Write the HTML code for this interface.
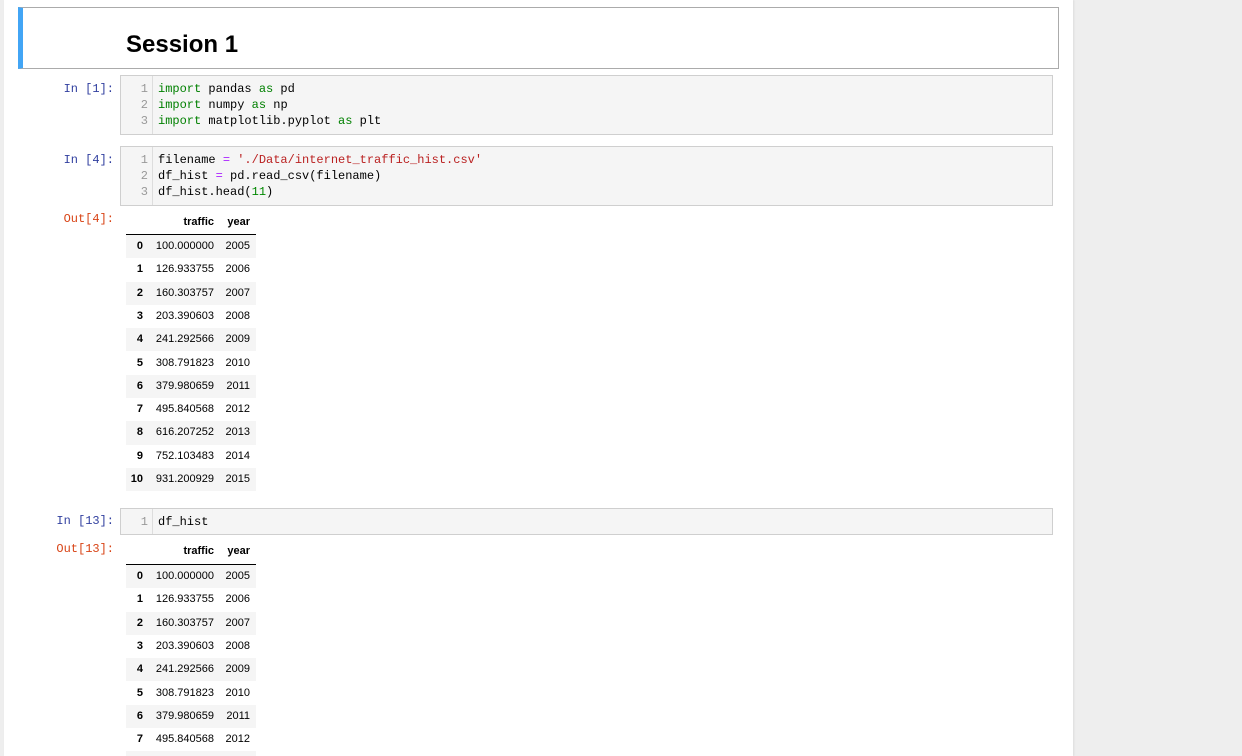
<!DOCTYPE html>
<html style="overflow:hidden;width:1242px;height:756px"><head><meta charset="utf-8"><style>
*{margin:0;padding:0;box-sizing:border-box}
body{width:1242px;height:756px;background:#eeeeee;position:relative;overflow:hidden;font-family:"Liberation Sans",Arial,sans-serif}
#page{position:absolute;left:4px;top:0;width:1069px;height:756px;background:#fff;box-shadow:1px 0 2px rgba(0,0,0,.08)}
.abs{position:absolute}
.md{left:18px;top:7px;width:1041px;height:62px;border:1px solid #ababab;border-left:5px solid #42a5f5}
h1{position:absolute;left:126px;top:31px;font-size:24px;line-height:28px;font-weight:bold;color:#000}
.prompt{position:absolute;width:114px;text-align:right;font-family:"Liberation Mono",monospace;font-size:12px;line-height:16px}
.in{color:#303f9f}.out{color:#d84315}
.cell{position:absolute;left:120px;width:933px;background:#f5f5f5;border:1px solid #cfcfcf}
.gut{position:absolute;left:0;top:0;bottom:0;width:32px;border-right:1px solid #ddd;background:#f5f5f5}
.ln{position:absolute;left:0;width:27px;text-align:right;color:#999;font-family:"Liberation Mono",monospace;font-size:12px;line-height:16px}
.code{position:absolute;left:37px;font-family:"Liberation Mono",monospace;font-size:12px;line-height:16px;color:#000;white-space:pre}
.k{color:#008000}.s{color:#ba2121}.n{color:#080}.o{color:#aa22ff}
.row{position:absolute;left:126px;width:130px;height:23.3px;font-size:11px;line-height:23.3px;color:#000}
.row.e{background:#f5f5f5}
.row span{position:absolute;top:0}
.i{right:113px;font-weight:bold;text-align:right}
.t{right:42px}
.y{right:6px}
.hd{font-weight:bold}
.bd{position:absolute;left:126px;width:130px;height:1px;background:#000}
</style></head><body>
<div id="page">
</div>
<div class="abs md"></div>
<h1>Session 1</h1>

<div class="prompt in" style="top:81px">In [1]:</div>
<div class="cell" style="top:75px;height:60px">
 <div class="gut"></div>
 <div class="ln" style="top:5px">1<br>2<br>3</div>
 <div class="code" style="top:5px"><span class="k">import</span> pandas <span class="k">as</span> pd
<span class="k">import</span> numpy <span class="k">as</span> np
<span class="k">import</span> matplotlib.pyplot <span class="k">as</span> plt</div>
</div>

<div class="prompt in" style="top:152px">In [4]:</div>
<div class="cell" style="top:146px;height:60px">
 <div class="gut"></div>
 <div class="ln" style="top:5px">1<br>2<br>3</div>
 <div class="code" style="top:5px">filename <span class="o">=</span> <span class="s">'./Data/internet_traffic_hist.csv'</span>
df_hist <span class="o">=</span> pd.read_csv(filename)
df_hist.head(<span class="n">11</span>)</div>
</div>

<div class="prompt out" style="top:211px">Out[4]:</div>
<div class="row hd" style="top:211px"><span class="t">traffic</span><span class="y">year</span></div>
<div class="bd" style="top:234px"></div>
<div class="row e" style="top:235px"><span class="i">0</span><span class="t">100.000000</span><span class="y">2005</span></div>
<div class="row" style="top:258.3px"><span class="i">1</span><span class="t">126.933755</span><span class="y">2006</span></div>
<div class="row e" style="top:281.6px"><span class="i">2</span><span class="t">160.303757</span><span class="y">2007</span></div>
<div class="row" style="top:304.9px"><span class="i">3</span><span class="t">203.390603</span><span class="y">2008</span></div>
<div class="row e" style="top:328.2px"><span class="i">4</span><span class="t">241.292566</span><span class="y">2009</span></div>
<div class="row" style="top:351.5px"><span class="i">5</span><span class="t">308.791823</span><span class="y">2010</span></div>
<div class="row e" style="top:374.8px"><span class="i">6</span><span class="t">379.980659</span><span class="y">2011</span></div>
<div class="row" style="top:398.1px"><span class="i">7</span><span class="t">495.840568</span><span class="y">2012</span></div>
<div class="row e" style="top:421.4px"><span class="i">8</span><span class="t">616.207252</span><span class="y">2013</span></div>
<div class="row" style="top:444.7px"><span class="i">9</span><span class="t">752.103483</span><span class="y">2014</span></div>
<div class="row e" style="top:468px"><span class="i">10</span><span class="t">931.200929</span><span class="y">2015</span></div>

<div class="prompt in" style="top:513px">In [13]:</div>
<div class="cell" style="top:508px;height:27px">
 <div class="gut"></div>
 <div class="ln" style="top:5px">1</div>
 <div class="code" style="top:5px">df_hist</div>
</div>

<div class="prompt out" style="top:541px">Out[13]:</div>
<div class="row hd" style="top:540px"><span class="t">traffic</span><span class="y">year</span></div>
<div class="bd" style="top:564px"></div>
<div class="row e" style="top:565px"><span class="i">0</span><span class="t">100.000000</span><span class="y">2005</span></div>
<div class="row" style="top:588.3px"><span class="i">1</span><span class="t">126.933755</span><span class="y">2006</span></div>
<div class="row e" style="top:611.6px"><span class="i">2</span><span class="t">160.303757</span><span class="y">2007</span></div>
<div class="row" style="top:634.9px"><span class="i">3</span><span class="t">203.390603</span><span class="y">2008</span></div>
<div class="row e" style="top:658.2px"><span class="i">4</span><span class="t">241.292566</span><span class="y">2009</span></div>
<div class="row" style="top:681.5px"><span class="i">5</span><span class="t">308.791823</span><span class="y">2010</span></div>
<div class="row e" style="top:704.8px"><span class="i">6</span><span class="t">379.980659</span><span class="y">2011</span></div>
<div class="row" style="top:728.1px"><span class="i">7</span><span class="t">495.840568</span><span class="y">2012</span></div>
<div class="row e" style="top:751.4px;height:4.6px"></div>
</body></html>
